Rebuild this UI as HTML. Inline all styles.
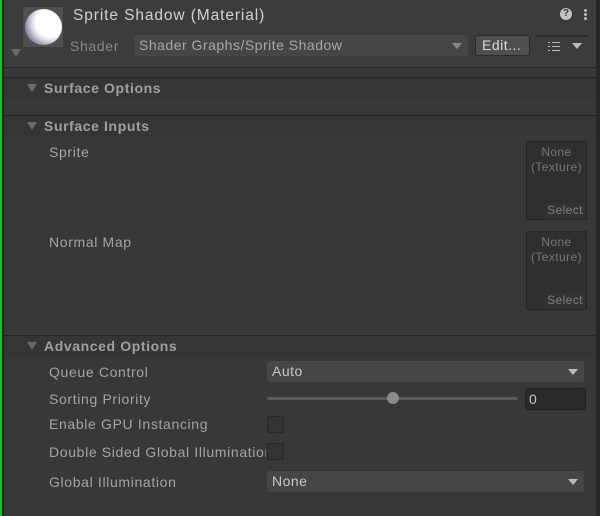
<!DOCTYPE html>
<html><head><style>
*{margin:0;padding:0;box-sizing:border-box}
body{width:600px;height:516px;background:#383838;position:relative;overflow:hidden;font-family:"Liberation Sans",sans-serif;font-size:14px;color:#c4c4c4}
.a{position:absolute}
.lbl{position:absolute;color:#a4a4a4;font-size:14px;line-height:16px;letter-spacing:0.65px;white-space:nowrap}
.hdr{position:absolute;left:4px;width:592px;background:#353535}
.hdr span{position:absolute;left:40px;font-weight:bold;color:#a0a0a0;font-size:14px;line-height:20px;letter-spacing:0.6px}
.tri{position:absolute;width:0;height:0;border-left:5px solid transparent;border-right:5px solid transparent;border-top:8px solid #6a6a6a}
.line{position:absolute;left:4px;width:592px;height:1px;background:#232323}
.dd{position:absolute;background:#464646;border-radius:3px;color:#c8c8c8;font-size:14px;line-height:21px;padding-left:5px;letter-spacing:0.5px}
.dd i{position:absolute;right:6px;top:8px;width:0;height:0;border-left:5px solid transparent;border-right:5px solid transparent;border-top:6px solid #bbb}
.tex{position:absolute;width:61px;height:79px;background:#2f2f2f;border:1px solid #252525;border-radius:2px;color:#777;font-size:12px;text-align:center;line-height:15px;padding-top:3px;letter-spacing:0.4px}
.tex b{position:absolute;right:1px;bottom:1px;width:40px;height:15px;background:#333;font-weight:normal;font-size:12px;line-height:15px;color:#808080}
.cb{position:absolute;left:267px;width:17px;height:17px;background:#333;border:1px solid #282828;border-radius:2px}
</style></head><body>
<div class="a" style="left:0;top:0;width:2px;height:516px;background:#18c418"></div>
<div class="a" style="left:2px;top:0;width:2px;height:516px;background:#232323"></div>
<div class="a" style="left:4px;top:0;width:592px;height:67px;background:#3c3c3c"></div>
<div class="a" style="left:596px;top:0;width:4px;height:516px;background:#262626"></div>
<div class="a" style="left:23px;top:7px;width:40px;height:40px;background:#505050"></div>
<div class="a" style="left:25px;top:9px;width:37px;height:36px;border-radius:50%;background:radial-gradient(circle at 68% 38%,#fff 0,#fff 42%,#d8d8e8 55%,#8a8aa0 75%,#4a4a5a 100%)"></div>
<div class="tri" style="left:11px;top:49px"></div>
<div class="a" style="left:73px;top:7px;font-size:15.5px;color:#d2d2d2;letter-spacing:0.9px">Sprite Shadow (Material)</div>
<div class="a" style="left:560px;top:8px;width:12px;height:12px;border-radius:50%;background:#c4c4c4;color:#383838;font-size:10px;font-weight:bold;text-align:center;line-height:12px">?</div>
<div class="a" style="left:584px;top:9px;width:3px;height:3px;background:#bbb;border-radius:50%;box-shadow:0 4px 0 #bbb,0 8px 0 #bbb"></div>
<div class="lbl" style="left:70px;top:38px;color:#8a8a8a">Shader</div>
<div class="dd" style="left:134px;top:35px;width:334px;color:#a8a8a8">Shader Graphs/Sprite Shadow<i style="border-top-color:#888"></i></div>
<div class="dd" style="left:475px;top:35px;width:55px;background:#4f4f4f;border:1px solid #2a2a2a;color:#dcdcdc;line-height:19px;padding-left:6px">Edit...</div>
<div class="dd" style="left:536px;top:35px;width:53px;background:#464646;border:1px solid #2a2a2a">
 <div class="a" style="left:11px;top:6px;width:2px;height:1px;background:#bbb;box-shadow:0 4px 0 #bbb,0 8px 0 #bbb"></div>
 <div class="a" style="left:15px;top:6px;width:8px;height:1px;background:#bbb;box-shadow:0 4px 0 #bbb,0 8px 0 #bbb"></div><i style="top:7px;right:6px"></i></div>
<div class="line" style="top:67px"></div>
<div class="line" style="top:77px"></div>
<div class="hdr" style="top:78px;height:20px"><div class="tri" style="left:23px;top:6px"></div><span>Surface Options</span></div>
<div class="line" style="top:115px"></div>
<div class="hdr" style="top:116px;height:20px"><div class="tri" style="left:23px;top:6px"></div><span>Surface Inputs</span></div>
<div class="lbl" style="left:49px;top:144px">Sprite</div>
<div class="tex" style="left:526px;top:141px">None<br>(Texture)<b>Select</b></div>
<div class="lbl" style="left:49px;top:234px">Normal Map</div>
<div class="tex" style="left:526px;top:231px">None<br>(Texture)<b>Select</b></div>
<div class="line" style="top:335px"></div>
<div class="hdr" style="top:336px;height:21px"><div class="tri" style="left:23px;top:6px"></div><span>Advanced Options</span></div>
<div class="lbl" style="left:49px;top:364px">Queue Control</div>
<div class="dd" style="left:267px;top:361px;width:317px">Auto<i></i></div>
<div class="lbl" style="left:49px;top:391px">Sorting Priority</div>
<div class="a" style="left:267px;top:397px;width:251px;height:3px;background:#5a5a5a;border-radius:1px"></div>
<div class="a" style="left:387px;top:392px;width:12px;height:12px;border-radius:50%;background:#8a8a8a"></div>
<div class="a" style="left:525px;top:388px;width:61px;height:22px;background:#2a2a2a;border:1px solid #212121;border-radius:3px;color:#c4c4c4;font-size:14px;line-height:21px;padding-left:3px">0</div>
<div class="lbl" style="left:49px;top:416px">Enable GPU Instancing</div>
<div class="cb" style="top:416px"></div>
<div class="lbl" style="left:49px;top:444px;width:217px;overflow:hidden">Double Sided Global Illumination</div>
<div class="cb" style="top:443px"></div>
<div class="lbl" style="left:49px;top:474px">Global Illumination</div>
<div class="dd" style="left:267px;top:471px;width:317px">None<i></i></div>
</body></html>
